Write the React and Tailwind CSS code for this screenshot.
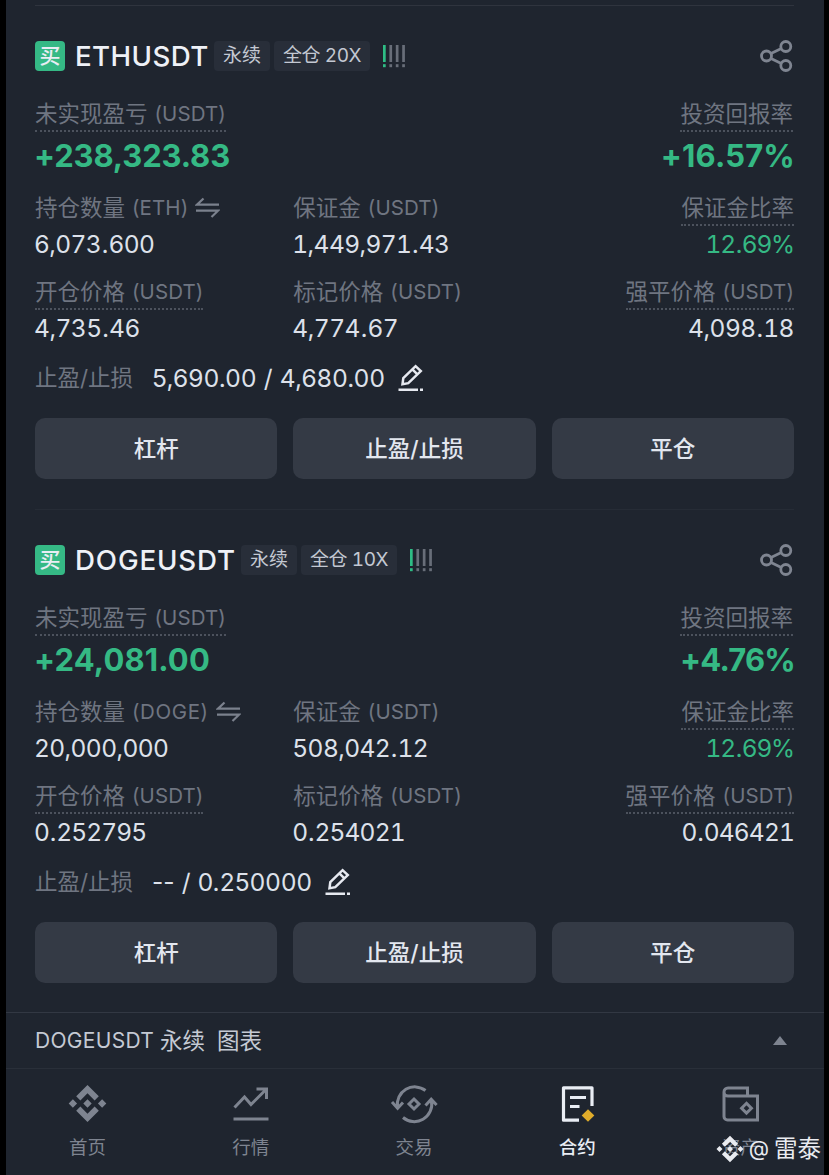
const UI = "font-['Inter','Noto_Sans_CJK_SC',sans-serif]";

function Label({ text, unit, dotted, wide, children }) {
  return (
    <div className="flex h-[34px] items-start">
      <div
        className={
          "flex h-[34px] items-center whitespace-nowrap border-b-2 text-[22.5px] leading-[32px] text-[#6f7581] " +
          (dotted ? "border-dotted border-[#4c525d]" : "border-transparent")
        }
      >
        <span>{text}</span>
        {unit && <span className={"ml-[7px] text-[20.5px] " + (wide ? "tracking-[0.6px]" : "tracking-[0.1px]")}>({unit})</span>}
        {children}
      </div>
    </div>
  );
}

// Figures with evenly spaced digits and a little air round the decimal point.
function Num({ text }) {
  return (
    <span className="tabular-nums">
      {text.split(".").map((part, i) => (
        <span key={i} className={i > 0 ? "before:mx-[0.7px] before:content-['.']" : ""}>
          {part}
        </span>
      ))}
    </span>
  );
}

function Value({ text, className = "text-[#dde1ea] tracking-[-0.6px]" }) {
  return (
    <div className={"-ml-[1px] mt-[2px] h-8 whitespace-nowrap text-[24.5px] leading-[33px] " + className}>
      <Num text={text} />
    </div>
  );
}

function SwapIcon() {
  return (
    <svg className="ml-[7px] h-[24px] w-[25px]" viewBox="0 0 25 24" fill="none" stroke="#7b818d" strokeWidth="2.2">
      <path d="M24 8.7H2L8.5 2.5M1 14.7h22L16.5 21" />
    </svg>
  );
}

function EditIcon() {
  return (
    <svg className="ml-[13px] h-[28px] w-[26px]" viewBox="0 0 26 28" fill="none" stroke="#e6e9f0" strokeWidth="2.5">
      <path d="M4.5 20.2l.8-6L17.6 2.2l5.2 4.9L10.3 19.2zM14.4 5.4l5 4.9" />
      <path d="M.5 25.7h19.5M22 25.7h3" />
    </svg>
  );
}

function ShareIcon() {
  return (
    <svg className="mr-[1px] h-[32px] w-[33px]" viewBox="0 0 33 32" fill="none" stroke="#7f8591" strokeWidth="2.8">
      <circle cx="6.5" cy="16" r="5" />
      <circle cx="25.8" cy="6.5" r="5" />
      <circle cx="25.8" cy="25.5" r="5" />
      <path d="M11 13.6l10.3-5M11 18.4l10.3 5" />
    </svg>
  );
}

function RiskBars() {
  return (
    <svg className="ml-[12px] h-[24px] w-[25px]" viewBox="0 0 25 24">
      {[1, 7.4, 13.8, 20.2].map((x, i) => (
        <g key={x} fill={i === 0 ? "#2ebd85" : "#686e79"}>
          <rect x={x} y="1" width="2.7" height="17" />
          <rect x={x} y="20.2" width="2.7" height="3" />
        </g>
      ))}
    </svg>
  );
}

function Tag({ children, className = "" }) {
  return (
    <span
      className={
        "flex h-[30px] items-center whitespace-nowrap rounded-[4px] bg-[#282e39] px-[9px] text-[19px] tabular-nums text-[#c3c8d2] " +
        className
      }
    >
      {children}
    </span>
  );
}

function Position({ p, className }) {
  return (
    <section className={"ml-[29px] mr-[30px] flex flex-col border-t pt-[34px] " + className}>
      <div className="flex h-8 items-center">
        <span className="flex size-[30px] items-center justify-center rounded-[4px] bg-[#35b985] text-[21px] font-medium text-[#e9edf4]">
          买
        </span>
        <h2 className={"ml-[10px] text-[27.7px] font-medium leading-[34px] text-[#eef1f7] " + p.symbolClass}>{p.symbol}</h2>
        <div className="flex gap-[4px]">
          <Tag>永续</Tag>
          <Tag className="tracking-[-0.45px]">全仓 {p.leverage}</Tag>
        </div>
        <RiskBars />
        <div className="ml-auto">
          <ShareIcon />
        </div>
      </div>

      <div className="mt-[26px] flex justify-between pr-[1px]">
        <Label text="未实现盈亏" unit="USDT" dotted />
        <Label text="投资回报率" dotted />
      </div>
      <div className="mt-2 flex h-8 justify-between text-[31px] font-bold leading-[32px] text-[#35b984]">
        <span className={"-ml-[1px] " + p.pnlClass}>{p.pnl}</span>
        <span className={"-mr-[1px] " + p.roiClass}>{p.roi}</span>
      </div>

      <div className="mt-5 grid grid-cols-3 gap-x-4">
        <div>
          <Label text="持仓数量" unit={p.asset} wide={p.asset === "DOGE"}>
            <SwapIcon />
          </Label>
          <Value text={p.size} />
        </div>
        <div>
          <Label text="保证金" unit="USDT" />
          <Value text={p.margin} />
        </div>
        <div className="flex flex-col items-end">
          <Label text="保证金比率" dotted />
          <Value text="12.69%" className="text-[#35b984] tracking-[-1.2px]" />
        </div>
      </div>

      <div className="mt-4 grid grid-cols-3 gap-x-4">
        <div>
          <Label text="开仓价格" unit="USDT" dotted />
          <Value text={p.entry} className={p.priceClass} />
        </div>
        <div>
          <Label text="标记价格" unit="USDT" />
          <Value text={p.mark} className={p.priceClass} />
        </div>
        <div className="flex flex-col items-end">
          <Label text="强平价格" unit="USDT" dotted />
          <Value text={p.liq} className={p.priceClass} />
        </div>
      </div>

      <div className="mt-[18px] flex h-8 items-center">
        <span className="w-[117px] text-[22.5px] text-[#6f7581]">止盈/止损</span>
        <span className={"whitespace-nowrap text-[24.5px] text-[#dde1ea] " + p.tpslClass}>{p.tpsl}</span>
        <EditIcon />
      </div>

      <div className="mt-6 grid grid-cols-3 gap-x-4">
        {["杠杆", "止盈/止损", "平仓"].map((t) => (
          <button key={t} className="h-[61px] rounded-[10px] bg-[#343a45] text-[22.5px] font-medium text-[#e3e7ef]">
            {t}
          </button>
        ))}
      </div>
    </section>
  );
}

const positions = [
  {
    symbol: "ETHUSDT", symbolClass: "w-[139px] tracking-[0.4px]", leverage: "20X",
    pnl: "+238,323.83", pnlClass: "tracking-[-0.15px]", roi: "+16.57%", roiClass: "tracking-[0.15px]", asset: "ETH",
    size: "6,073.600", margin: "1,449,971.43", entry: "4,735.46", mark: "4,774.67", liq: "4,098.18",
    priceClass: "text-[#dde1ea] tracking-[-0.5px]",
    tpsl: "5,690.00 / 4,680.00", tpslClass: "tracking-[0.17px]",
  },
  {
    symbol: "DOGEUSDT", symbolClass: "w-[166px] tracking-[0.85px]", leverage: "10X",
    pnl: "+24,081.00", pnlClass: "tracking-[0.15px]", roi: "+4.76%", roiClass: "tracking-[-0.8px]", asset: "DOGE",
    size: "20,000,000", margin: "508,042.12", entry: "0.252795", mark: "0.254021", liq: "0.046421",
    priceClass: "text-[#dde1ea] tracking-[-0.85px]",
    tpsl: "-- / 0.250000", tpslClass: "tracking-[0.1px]",
  },
];

function BinanceMark({ className }) {
  return (
    <svg className={className} viewBox="0 0 40 40" fill="currentColor">
      <path d="M20 1L31.6 12.6 27.3 16.9 20 9.6 12.7 16.9 8.4 12.6z" />
      <path d="M20 39L31.6 27.4 27.3 23.1 20 30.4 12.7 23.1 8.4 27.4z" />
      <path d="M20 15.7l4.3 4.3-4.3 4.3-4.3-4.3zM5 15.7L9.3 20 5 24.3.7 20zM35 15.7l4.3 4.3-4.3 4.3-4.3-4.3z" />
    </svg>
  );
}

function MarketIcon() {
  return (
    <svg className="size-[40px]" viewBox="0 0 40 40" fill="none" stroke="currentColor" strokeWidth="3">
      <path d="M3.5 23.5L13.5 13l6.5 7.5L35 5.5M25.5 5H35.5v10M2.5 35h35" />
    </svg>
  );
}

function TradeIcon() {
  return (
    <svg className="h-[40px] w-[48px]" viewBox="0 0 48 40" fill="none" stroke="currentColor" strokeWidth="3">
      <path d="M35.5 6.5A17.5 17.5 0 0 0 7.5 23M2 18l5.6 6.2L13 18.4" />
      <path d="M13 33.5A17.5 17.5 0 0 0 41.5 17M35.5 21.5L41.2 15.3 46.6 21" />
      <path d="M24 15l5 5-5 5-5-5z" />
    </svg>
  );
}

function FuturesIcon() {
  return (
    <svg className="size-[40px]" viewBox="0 0 40 40" fill="none" stroke="currentColor" strokeWidth="3.2" strokeLinejoin="round">
      <path d="M35 22V3.8H6.5v32.4H22M13 13.5h16M13 22.5h9.5" />
      <path d="M31 25.2l6.3 6.3-6.3 6.3-6.3-6.3z" fill="#e0ac2b" stroke="none" />
    </svg>
  );
}

function WalletIcon() {
  return (
    <svg className="size-[40px]" viewBox="0 0 40 40" fill="none" stroke="currentColor" strokeWidth="3">
      <path d="M4 8v24.5A3.5 3.5 0 0 0 7.500 36h30V12H6.500M27.500 12V4H8a4 4 0 0 0 0 8" />
      <path d="M26.500 19.300l4.900 4.900-4.900 4.900-4.900-4.900z" />
    </svg>
  );
}

function NavItem({ label, icon, active }) {
  return (
    <div className={"flex flex-col items-center pt-[15px] " + (active ? "text-[#e9edf4]" : "text-[#7e8490]")}>
      {icon}
      <span className={"mt-[8px] text-[18.5px] leading-[30px] " + (active ? "font-medium" : "")}>{label}</span>
    </div>
  );
}

export default function App() {
  return (
    <div className={"h-[1175px] w-[829px] overflow-hidden bg-black pl-[6px] pr-[5px] " + UI}>
      <main className="relative flex h-full flex-col bg-[#1f252f] pt-[5px]">
        <Position p={positions[0]} className="h-[504px] border-[#2f343e]" />
        <Position p={positions[1]} className="h-[503px] border-[#262c36]" />
        <div className="flex h-[56px] items-center justify-between border-t border-[#323843] px-[29px] text-[22.5px] text-[#c5cad4]">
          <span className="flex items-center">
            <span className="text-[21px] tracking-[0.3px]">DOGEUSDT</span>
            <span className="ml-[6px]">永续</span>
            <span className="ml-[12px]">图表</span>
          </span>
          <svg className="mr-[8px] h-[9px] w-[14px]" viewBox="0 0 14 9" fill="#7e8490">
            <path d="M7 0l7 9H0z" />
          </svg>
        </div>
        <nav className="grid h-[107px] grid-cols-5 border-t border-[#292f39] pr-[2px]">
          <NavItem label="首页" icon={<BinanceMark className="mb-[1px] size-[39px]" />} />
          <NavItem label="行情" icon={<MarketIcon />} />
          <NavItem label="交易" icon={<TradeIcon />} />
          <NavItem label="合约" icon={<FuturesIcon />} active />
          <NavItem label="资产" icon={<WalletIcon />} />
        </nav>
        <div className="absolute bottom-[9px] right-[3px] flex h-[34px] items-center whitespace-nowrap text-[#e9ebf0]">
          <BinanceMark className="size-[28px]" />
          <span className="ml-[5px] text-[21px]">@</span>
          <span className="ml-[5px] text-[23.5px]">雷泰</span>
        </div>
      </main>
    </div>
  );
}
